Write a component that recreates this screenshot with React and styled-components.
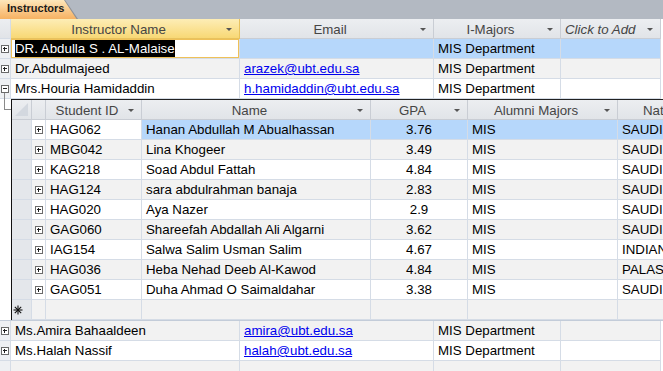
import React from 'react';
import styled, { createGlobalStyle } from 'styled-components';

// styling:

const GRID = '#d5dce6';
const ALT = '#f2f2f2';
const SEL = '#b6d7fb';

const GlobalStyle = createGlobalStyle`
  html, body {
    margin: 0;
    padding: 0;
    background: #fff;
  }
  body {
    font-family: "Liberation Sans", Arial, sans-serif;
  }
`;

const Window = styled.div`
  width: 663px;
  height: 371px;
  overflow: hidden;
  background: #fff;
  font-family: "Liberation Sans", Arial, sans-serif;
  font-size: 13.3px;
  color: #111;
`;

const TabStrip = styled.div`
  height: 19px;
  background: #b3b9c2;
  display: flex;
`;

const TabEdge = styled.div`
  width: 78px;
  height: 19px;
  background: #8e9196;
  clip-path: polygon(0 0, 65px 0, 78px 100%, 0 100%);
`;

const TabFace = styled.div`
  box-sizing: border-box;
  width: 77px;
  height: 19px;
  padding-left: 7px;
  background: linear-gradient(#fde7bb, #fac888 55%, #f6b263);
  clip-path: polygon(0 0, 64px 0, 76.5px 100%, 0 100%);
  font-size: 11px;
  font-weight: bold;
  line-height: 17px;
  color: #1a1a1a;
`;

const Row = styled.div`
  display: flex;
  height: 20px;
  background: ${(p) => p.$bg || '#fff'};
`;

const Head = styled.div`
  flex: none;
  box-sizing: border-box;
  width: ${(p) => p.$w}px;
  height: 20px;
  display: flex;
  align-items: center;
  padding: 1px 7px 0 ${(p) => (p.$left ? 4 : 0)}px;
  background: ${(p) => (p.$active
    ? 'linear-gradient(#fdedb6, #f8d875)'
    : 'linear-gradient(#eceef1, #e1e4e8)')};
  border-right: 1px solid ${(p) => (p.$active ? '#e8c25e' : '#c9cdd4')};
  border-bottom: 1px solid ${(p) => (p.$active ? '#e8c25e' : '#c9cdd4')};
  color: #454545;
  font-style: ${(p) => (p.$italic ? 'italic' : 'normal')};
`;

const HeadLabel = styled.span`
  flex: 1;
  text-align: ${(p) => (p.$left ? 'left' : 'center')};
  white-space: nowrap;
  overflow: hidden;
`;

const DropArrow = styled.span`
  flex: none;
  width: 0;
  height: 0;
  border-left: 3px solid transparent;
  border-right: 3px solid transparent;
  border-top: 3px solid #555;
`;

const Cell = styled.div`
  flex: none;
  box-sizing: border-box;
  width: ${(p) => p.$w}px;
  height: 20px;
  padding: 0 4px;
  border-right: 1px solid ${GRID};
  border-bottom: 1px solid ${GRID};
  background: ${(p) => p.$bg || 'transparent'};
  box-shadow: ${(p) => (p.$current ? 'inset 0 0 0 1px #efc158' : 'none')};
  line-height: 20px;
  white-space: nowrap;
  overflow: hidden;
  text-align: ${(p) => p.$align || 'left'};
  color: #000;
`;

const Filler = styled.div`
  flex: 1;
  height: 20px;
  background: #fff;
`;

const Picked = styled.span`
  display: inline-block;
  vertical-align: top;
  background: #000;
  color: #fff;
  line-height: 17px;
  margin-top: 1px;
`;

const Link = styled.span`
  color: #0000ee;
  text-decoration: underline;
`;

const Selector = styled.div`
  flex: none;
  position: relative;
  box-sizing: border-box;
  width: ${(p) => p.$w || 11}px;
  height: 20px;
  display: flex;
  align-items: center;
  padding-left: 1px;
  background: ${(p) => p.$bg || '#eef0f3'};
  border-right: 1px solid ${GRID};
  border-bottom: 1px solid ${GRID};

  ${(p) => p.$tail && `
    &::after {
      content: '';
      position: absolute;
      left: 4px;
      top: 14px;
      bottom: -1px;
      border-left: 1px solid #8a8a8a;
    }
  `}
`;

const ExpandCell = styled(Cell)`
  display: flex;
  align-items: center;
  justify-content: center;
  padding: 0;
`;

const Svg = styled.svg`
  display: block;
  flex: none;
`;

const SubWrap = styled.div`
  display: flex;
  box-sizing: border-box;
  height: 222px;
  border-bottom: 1px solid #c3ccd9;
`;

const Gutter = styled.div`
  flex: none;
  width: 11px;
`;

const TreeLine = styled.div`
  width: 7px;
  height: 10px;
  margin-left: 4px;
  border-left: 1px solid #8a8a8a;
  border-bottom: 1px solid #8a8a8a;
`;

const SubSheet = styled.div`
  flex: none;
  border-left: 1px solid #111;
  border-top: 1px solid #222;
`;

const SelectAll = styled.div`
  flex: none;
  box-sizing: border-box;
  width: 20px;
  height: 20px;
  background: linear-gradient(#eceef1, #e1e4e8);
  border-right: 1px solid #c9cdd4;
  border-bottom: 1px solid #c9cdd4;
`;

// react:

function ExpandBox({ open }) {
  return (
    <Svg width="8" height="8" viewBox="0 0 8 8">
      <rect x="0.5" y="0.5" width="7" height="7" fill="#fff" stroke="#6a6a6a" />
      <line x1="2" y1="3.5" x2="6" y2="3.5" stroke="#222" />
      {!open && <line x1="3.5" y1="2" x2="3.5" y2="6" stroke="#222" />}
    </Svg>
  );
}

function NewMark() {
  return (
    <Svg width="10" height="10" viewBox="0 0 10 10">
      <g stroke="#111" strokeWidth="1.1">
        <line x1="5" y1="0.5" x2="5" y2="9.5" />
        <line x1="0.5" y1="5" x2="9.5" y2="5" />
        <line x1="1.8" y1="1.8" x2="8.2" y2="8.2" />
        <line x1="8.2" y1="1.8" x2="1.8" y2="8.2" />
      </g>
    </Svg>
  );
}

const mainCols = [
  { label: 'Instructor Name', w: 229, active: true },
  { label: 'Email', w: 194 },
  { label: 'I-Majors', w: 127 },
  { label: 'Click to Add', w: 100, italic: true, left: true },
];

const instructorsTop = [
  { name: 'DR. Abdulla S . AL-Malaise', email: '', major: 'MIS Department' },
  { name: 'Dr.Abdulmajeed', email: 'arazek@ubt.edu.sa', major: 'MIS Department' },
  { name: 'Mrs.Houria Hamidaddin', email: 'h.hamidaddin@ubt.edu.sa', major: 'MIS Department' },
];

const instructorsBottom = [
  { name: 'Ms.Amira Bahaaldeen', email: 'amira@ubt.edu.sa', major: 'MIS Department' },
  { name: 'Ms.Halah Nassif', email: 'halah@ubt.edu.sa', major: 'MIS Department' },
  { name: '', email: '', major: '' },
];

const subCols = [
  { key: 'id', label: 'Student ID', w: 96 },
  { key: 'name', label: 'Name', w: 229 },
  { key: 'gpa', label: 'GPA', w: 97, align: 'center' },
  { key: 'major', label: 'Alumni Majors', w: 150 },
  { key: 'nat', label: 'Nationality', w: 126 },
];

const students = [
  { id: 'HAG062', name: 'Hanan Abdullah M Abualhassan', gpa: '3.76', major: 'MIS', nat: 'SAUDI' },
  { id: 'MBG042', name: 'Lina Khogeer', gpa: '3.49', major: 'MIS', nat: 'SAUDI' },
  { id: 'KAG218', name: 'Soad Abdul Fattah', gpa: '4.84', major: 'MIS', nat: 'SAUDI' },
  { id: 'HAG124', name: 'sara abdulrahman banaja', gpa: '2.83', major: 'MIS', nat: 'SAUDI' },
  { id: 'HAG020', name: 'Aya Nazer', gpa: '2.9', major: 'MIS', nat: 'SAUDI' },
  { id: 'GAG060', name: 'Shareefah Abdallah Ali Algarni', gpa: '3.62', major: 'MIS', nat: 'SAUDI' },
  { id: 'IAG154', name: 'Salwa Salim Usman Salim', gpa: '4.67', major: 'MIS', nat: 'INDIAN' },
  { id: 'HAG036', name: 'Heba Nehad Deeb Al-Kawod', gpa: '4.84', major: 'MIS', nat: 'PALASTINIAN' },
  { id: 'GAG051', name: 'Duha Ahmad O Saimaldahar', gpa: '3.38', major: 'MIS', nat: 'SAUDI' },
];

function InstructorRow({ item, bg, current, open, last }) {
  const isNew = last && !item.name;
  return (
    <Row $bg={current ? SEL : bg}>
      <Selector $tail={open}>
        {!isNew && <ExpandBox open={open} />}
      </Selector>
      <Cell $w={229} $bg={current ? '#fff' : undefined} $current={current}>
        {current ? <Picked>{item.name}</Picked> : item.name}
      </Cell>
      <Cell $w={194}>{item.email && <Link>{item.email}</Link>}</Cell>
      <Cell $w={127}>{item.major}</Cell>
      <Cell $w={100} />
      <Filler />
    </Row>
  );
}

function StudentsTable() {
  return (
    <SubSheet>
      <Row $bg="#e4e7eb">
        <SelectAll>
          <Svg width="19" height="19" viewBox="0 0 19 19">
            <polygon points="3,16 16,16 16,3" fill="#d3d8df" />
          </Svg>
        </SelectAll>
        <Head $w={14} />
        {subCols.map((c) => (
          <Head key={c.key} $w={c.w}>
            <HeadLabel>{c.label}</HeadLabel>
            <DropArrow />
          </Head>
        ))}
      </Row>
      {students.map((s, i) => {
        const current = i === 0;
        const bg = current ? SEL : i % 2 === 1 ? ALT : '#fff';
        return (
          <Row key={s.id} $bg={bg}>
            <Selector $w={20} $bg="#e4e7eb" />
            <ExpandCell $w={14} $bg={current ? '#fff' : undefined}>
              <ExpandBox />
            </ExpandCell>
            {subCols.map((c) => (
              <Cell
                key={c.key}
                $w={c.w}
                $align={c.align}
                $bg={current && c.key === 'id' ? '#fff' : undefined}
              >
                {s[c.key]}
              </Cell>
            ))}
          </Row>
        );
      })}
      <Row $bg={ALT}>
        <Selector $w={20} $bg="#e4e7eb">
          <NewMark />
        </Selector>
        <Cell $w={14} />
        {subCols.map((c) => <Cell key={c.key} $w={c.w} />)}
      </Row>
    </SubSheet>
  );
}

export default function App() {
  return (
    <>
      <GlobalStyle />
      <Window>
        <TabStrip>
          <TabEdge>
            <TabFace>Instructors</TabFace>
          </TabEdge>
        </TabStrip>

        <Row>
          <Selector $bg="linear-gradient(#eceef1, #e1e4e8)" />
          {mainCols.map((c) => (
            <Head key={c.label} $w={c.w} $active={c.active} $italic={c.italic} $left={c.left}>
              <HeadLabel $left={c.left}>{c.label}</HeadLabel>
              <DropArrow />
            </Head>
          ))}
          <Filler />
        </Row>

        {instructorsTop.map((item, i) => (
          <InstructorRow
            key={item.name}
            item={item}
            current={i === 0}
            open={i === 2}
            bg={i % 2 === 1 ? ALT : '#fff'}
          />
        ))}

        <SubWrap>
          <Gutter>
            <TreeLine />
          </Gutter>
          <StudentsTable />
        </SubWrap>

        {instructorsBottom.map((item, i) => (
          <InstructorRow
            key={item.name || 'new'}
            item={item}
            last={i === instructorsBottom.length - 1}
            bg={i % 2 === 0 ? ALT : '#fff'}
          />
        ))}
      </Window>
    </>
  );
}
